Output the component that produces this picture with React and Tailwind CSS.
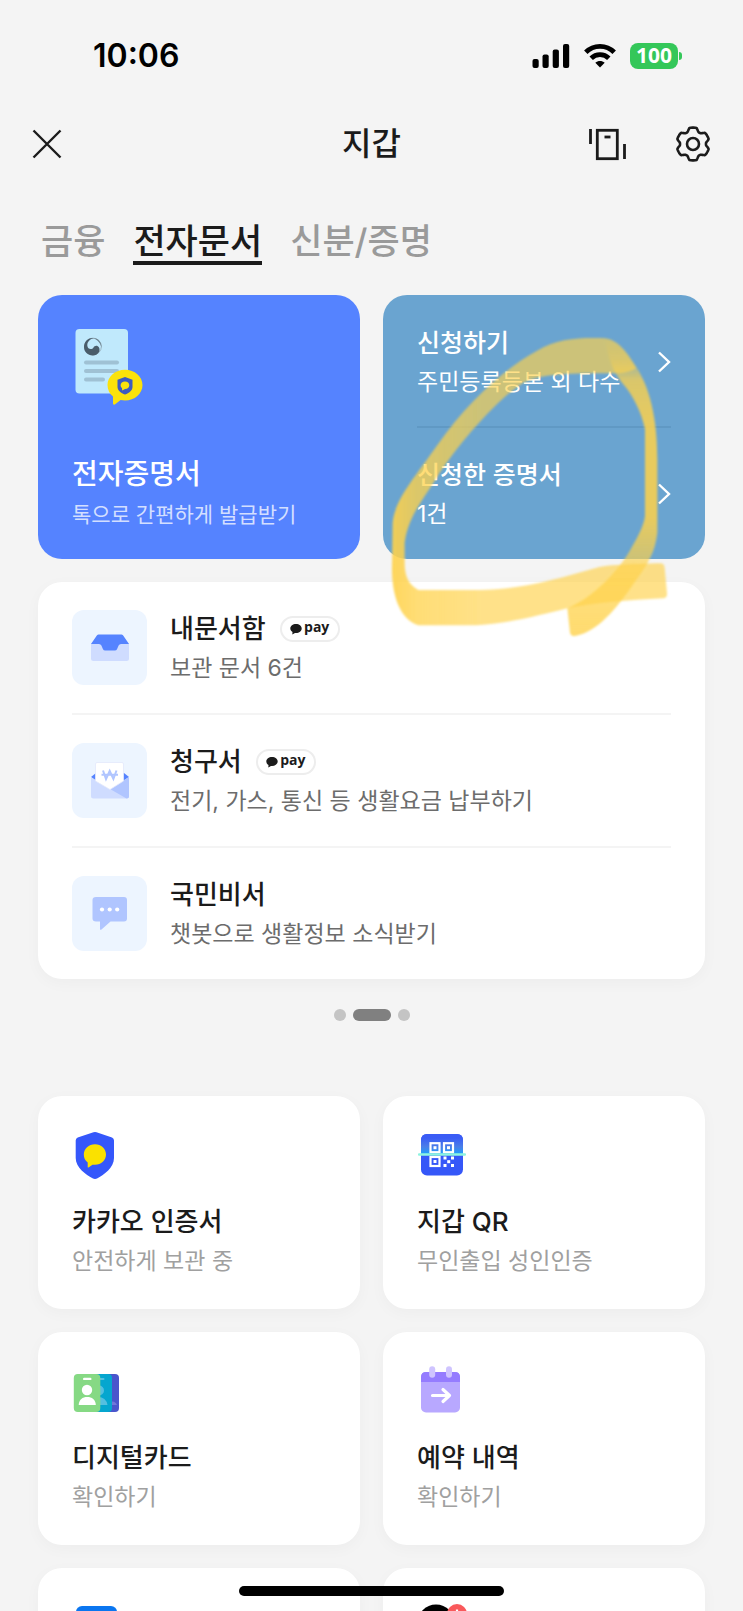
import clsx from 'clsx';

const tabs = ['금융', '전자문서', '신분/증명'];

// outline of the settings gear: six soft teeth around the centre
const gearPoints = Array.from({ length: 180 }, (_, i) => {
  const angle = (i / 180) * Math.PI * 2;
  const wave = Math.max(-1, Math.min(0.7, 0.35 - Math.cos(6 * angle) * 1.5));
  const r = 15 + wave * 2;
  return `${(18 + r * Math.cos(angle)).toFixed(2)},${(18 + r * Math.sin(angle)).toFixed(2)}`;
}).join(' ');

const CloseIcon = () => (
  <svg width="30" height="30" viewBox="0 0 30 30" fill="none" stroke="#1b1b1b" strokeWidth="2.4">
    <path d="M1.5 1.5L28.5 28.5M28.5 1.5L1.5 28.5" />
  </svg>
);

const CardsIcon = () => (
  <svg width="40" height="36" viewBox="0 0 40 36" fill="none" stroke="#1b1b1b" strokeWidth="2.8">
    <path d="M3.5 3V18M37.5 18V33" />
    <rect x="10.3" y="4.3" width="20" height="28.4" />
    <path d="M17.5 11H23.5" />
  </svg>
);

const GearIcon = () => (
  <svg width="36" height="36" viewBox="0 0 36 36" fill="none" stroke="#1b1b1b" strokeWidth="2.6" strokeLinejoin="round">
    <polygon points={gearPoints} />
    <circle cx="18" cy="18" r="6" />
  </svg>
);

const ChevronIcon = () => (
  <svg width="14" height="22" viewBox="0 0 14 22" fill="none" stroke="#ffffff" strokeWidth="2.4">
    <path d="M2 1.5L12 11L2 20.5" />
  </svg>
);

const CertificateIcon = () => (
  <svg width="72" height="82" viewBox="0 0 72 82">
    <rect x="3.5" y="2" width="52.5" height="64.5" rx="4" fill="#c0e9fc" />
    <circle cx="21" cy="19.5" r="8.4" fill="none" stroke="#9fb9c6" strokeWidth="1" />
    <path d="M22 11C15.500 10.200 12 15 12 20C12 25 16 28.700 21 28.500C26 28.300 28.800 24 27 20.500C25.500 17.800 22.500 18.500 21.500 20.500C20 23 15.500 22.500 15.300 18.500C15.200 14.500 18 12 22 11Z" fill="#4a5d6b" />
    <path d="M21 11C26 11 30 15 29.500 21C28.500 16 26 13 21 11Z" fill="#6b828f" />
    <g fill="#9fc1d4">
      <rect x="12" y="33.500" width="35" height="4" rx="2" />
      <rect x="12" y="42" width="35" height="4" rx="2" />
      <rect x="12" y="50.500" width="21" height="4" rx="2" />
    </g>
    <path d="M53 42.700C62.700 42.700 70.500 49.300 70.500 58C70.500 66.700 62.700 73.500 53 73.500C51.500 73.500 50 73.300 48.600 73L43.500 77C42 78.200 41 77.800 41 76V69.500C37.600 66.800 35.500 62.600 35.500 58C35.500 49.300 43.300 42.700 53 42.700Z" fill="#fbe20a" />
    <path d="M53 50L60.500 52.800V60C60.500 63.500 57 66 53 67.500C49 66 45.500 63.500 45.500 60V52.800Z" fill="#3d5bc0" />
    <path d="M53 54.500C55.500 54.500 57.300 56.200 57.300 58.200C57.300 60.300 55.500 62 53 62L50.200 63.500L50 61C49 60.300 48.600 59.400 48.600 58.200C48.600 56.200 50.500 54.500 53 54.500Z" fill="#fbe20a" />
  </svg>
);

const InboxIcon = () => (
  <svg width="75" height="75" viewBox="0 0 75 75">
    <path d="M19 33.500H57V48.500Q57 51 54.500 51H21.500Q19 51 19 48.500Z" fill="#cfdcff" />
    <path d="M26.500 24.500H49.500Q50.300 24.500 51 25.200L57 34H49Q47.300 34 46.600 35.600L45 39.200Q44.400 40.500 42.800 40.500H33.200Q31.600 40.500 31 39.200L29.400 35.600Q28.700 34 27 34H19L25 25.200Q25.700 24.500 26.500 24.500Z" fill="#5583ff" />
  </svg>
);

const BillIcon = () => (
  <svg width="75" height="75" viewBox="0 0 75 75">
    <path d="M19 34L24 30H52L57 34L52 38H24Z" fill="#5583ff" />
    <path d="M19 34L38 46L57 34V53Q57 55.500 54.500 55.500H21.500Q19 55.500 19 53Z" fill="#cfdcff" />
    <path d="M38 46L57 34V53Q57 55.500 54.500 55.500Z" fill="#b0c5ff" />
    <path d="M23.500 21Q23.500 19.500 25 19.500H50Q51.500 19.500 51.500 21V38L38 46.500L23.500 38Z" fill="#ffffff" stroke="#e3e9fb" strokeWidth="0.8" />
    <path d="M31 27.500L34 36L37.700 28L41.400 36L44.500 27.500M29.500 31.800H46" fill="none" stroke="#b0c5ff" strokeWidth="2" />
  </svg>
);

const ChatIcon = () => (
  <svg width="75" height="75" viewBox="0 0 75 75">
    <path d="M24 21H52Q55 21 55 24V42.500Q55 45.500 52 45.500H38.500L29.500 53.500Q28 54.600 28 52.800V45.500H24Q20.500 45.500 20.500 42.500V24Q20.500 21 24 21Z" fill="#b0c5ff" />
    <g fill="#ffffff">
      <circle cx="30" cy="33.500" r="2.100" />
      <circle cx="37.700" cy="33.500" r="2.100" />
      <circle cx="45.200" cy="33.500" r="2.100" />
    </g>
  </svg>
);

const ShieldIcon = () => (
  <svg className="overflow-visible" width="50" height="50" viewBox="0 0 50 50">
    <path d="M21.500 2.300Q23 1.700 24.500 2.300L40 7.500Q42 8.300 42 10.500V28C42 38 32 44.500 25.500 48.300Q23 49.500 20.500 48.300C14 44.500 3.700 38 3.700 28V10.500Q3.700 8.300 5.700 7.500Z" fill="#3557fb" />
    <path d="M23 14.300C29.300 14.300 34 18.800 34 24.500C34 30.300 29.300 34.800 23 34.800L20.500 34.700L16.500 37.500Q15.800 37.800 15.700 37V32.500C13 30.500 11.800 27.800 11.800 24.500C11.800 18.800 16.700 14.300 23 14.300Z" fill="#fae100" />
  </svg>
);

const QrIcon = () => (
  <svg className="overflow-visible" width="50" height="50" viewBox="0 0 50 50">
    <defs>
      <linearGradient id="qrScan" x1="0" y1="0" x2="0" y2="1">
        <stop offset="0.2" stopColor="#3a5cf5" />
        <stop offset="0.62" stopColor="#4a7ee8" />
        <stop offset="1" stopColor="#1aa0ff" />
      </linearGradient>
    </defs>
    <rect x="4" y="4" width="42" height="41.500" rx="6" fill="#3557f8" />
    <path d="M4 24.500V10Q4 4 10 4H40Q46 4 46 10V24.500Z" fill="url(#qrScan)" />
    <g fill="none" stroke="#ffffff" strokeWidth="2.200">
      <rect x="13.500" y="13.200" width="9" height="9" />
      <rect x="27" y="13.200" width="9" height="9" />
      <rect x="13.500" y="27" width="9" height="9" />
    </g>
    <g fill="#ffffff">
      <rect x="16.500" y="16.200" width="3" height="3" />
      <rect x="30" y="16.200" width="3" height="3" />
      <rect x="16.500" y="30" width="3" height="3" />
      <rect x="26.500" y="26.500" width="3" height="3" />
      <rect x="34" y="26.500" width="3" height="3" />
      <rect x="30.200" y="30.200" width="3" height="3" />
      <rect x="26.500" y="34" width="3" height="3" />
      <rect x="34" y="34" width="3" height="3" />
    </g>
    <rect x="1" y="23.300" width="48" height="2.400" rx="1" fill="#8df3e0" />
  </svg>
);

const IdCardIcon = () => (
  <svg className="overflow-visible" width="50" height="50" viewBox="0 0 50 50">
    <rect x="22" y="8" width="25" height="38" rx="4" fill="#4a55cc" />
    <path d="M38 36Q43 34 45 39H38Z" fill="#7078da" />
    <path d="M22 8H36Q40 8 40 12V42Q40 46 36 46H22Z" fill="#05a6cf" />
    <circle cx="27" cy="24.500" r="5" fill="#55bfe0" />
    <path d="M26 31Q34 31 35.500 39H26Z" fill="#55bfe0" />
    <path d="M28 12.900H31.500" stroke="#55bfe0" strokeWidth="2" strokeLinecap="round" />
    <rect x="1.800" y="8" width="26.500" height="38" rx="4" fill="#86d984" />
    <g fill="#ffffff">
      <rect x="11" y="11.700" width="8.500" height="2.400" rx="1.200" />
      <circle cx="15" cy="24" r="5.200" />
      <path d="M6.700 39C7 33.500 10.500 31 15.200 31C20 31 23.500 33.500 23.800 39Z" />
    </g>
  </svg>
);

const BookingIcon = () => (
  <svg className="overflow-visible" width="50" height="50" viewBox="0 0 50 50">
    <rect x="4" y="6" width="39" height="40.500" rx="5" fill="#b8a8ff" />
    <path d="M4 16V11Q4 6 9 6H38Q43 6 43 11V16Z" fill="#957cff" />
    <rect x="12.200" y="0.300" width="6" height="11.500" rx="3" fill="#cfc4ff" />
    <rect x="29" y="0.300" width="6" height="11.500" rx="3" fill="#cfc4ff" />
    <path d="M15.500 29.500H32.500M26 23.500L32.500 29.500L26 35.500" fill="none" stroke="#ffffff" strokeWidth="3.200" strokeLinecap="round" strokeLinejoin="round" />
  </svg>
);

const BlueCardIcon = () => (
  <svg className="overflow-visible" width="50" height="50" viewBox="0 0 50 50">
    <rect x="4" y="4" width="41" height="42" rx="6" fill="#0a76f0" />
  </svg>
);

const NoticeIcon = () => (
  <svg className="overflow-visible" width="50" height="50" viewBox="0 0 50 50">
    <ellipse cx="19" cy="22" rx="19" ry="19.500" fill="#000000" />
    <circle cx="40" cy="12" r="10" fill="#f9595b" />
    <path d="M40 7.500V13M40 15.500V17.500" stroke="#ffffff" strokeWidth="2.200" />
  </svg>
);

const PayBadge = () => (
  <span className="flex h-[26px] w-[60px] items-center justify-center gap-0.5 rounded-full border-2 border-[#ededed] bg-white">
    <svg width="12" height="12" viewBox="0 0 12 12" fill="#1b1b1b">
      <path d="M6 1C9.200 1 11.700 2.900 11.700 5.500C11.700 8 9.200 10 6 10L5 9.900L2.300 11.500L2.500 9C1.200 8.200 0.300 7 0.300 5.500C0.300 2.900 2.800 1 6 1Z" />
    </svg>
    <span className="pb-1 font-['Open_Sans',sans-serif] text-sm font-bold">pay</span>
  </span>
);

const documents = [
  { title: '내문서함', desc: '보관 문서 6건', icon: InboxIcon, pay: true },
  { title: '청구서', desc: '전기, 가스, 통신 등 생활요금 납부하기', icon: BillIcon, pay: true },
  { title: '국민비서', desc: '챗봇으로 생활정보 소식받기', icon: ChatIcon, pay: false },
];

const requests = [
  { title: '신청하기', desc: '주민등록등본 외 다수' },
  { title: '신청한 증명서', desc: '1건' },
];

const services = [
  { id: 'cert', title: '카카오 인증서', desc: '안전하게 보관 중', icon: ShieldIcon },
  { id: 'qr', title: '지갑 QR', desc: '무인출입 성인인증', icon: QrIcon },
  { id: 'card', title: '디지털카드', desc: '확인하기', icon: IdCardIcon },
  { id: 'booking', title: '예약 내역', desc: '확인하기', icon: BookingIcon },
  { id: 'blue', icon: BlueCardIcon },
  { id: 'notice', icon: NoticeIcon },
];

const StatusBar = () => (
  <div className="flex h-28 shrink-0 items-center justify-between pr-[61px] pl-[93px]">
    <span className="text-[32px] font-semibold text-black">10:06</span>
    <div className="flex items-center gap-3.5">
      <svg width="38" height="26" viewBox="0 0 38 26">
        <rect x="0.5" y="16" width="6.200" height="9" rx="2" />
        <rect x="10.500" y="11.500" width="6.200" height="13.500" rx="2" />
        <rect x="20.700" y="6.500" width="6.200" height="18.500" rx="2" />
        <rect x="31" y="1" width="6.200" height="24" rx="2" />
      </svg>
      <svg width="32" height="26" viewBox="0 0 32 26" fill="none" stroke="#000000" strokeWidth="4.800">
        <path d="M1.800 9.300C9.500 1.400 22.500 1.400 30.200 9.300" />
        <path d="M7.200 15.200C12 10.400 20 10.400 24.800 15.200" />
        <path d="M16 24.500L11.300 19.800C14 17.300 18 17.300 20.700 19.800Z" fill="#000000" stroke="none" />
      </svg>
      <div className="flex items-center gap-px">
        <span className="flex h-[26px] w-12 items-center justify-center rounded-lg bg-[#34c759] font-['Noto_Sans',sans-serif] text-[21px] font-bold text-white">100</span>
        <span className="h-2 w-[3px] rounded-r-full bg-[#34c759]" />
      </div>
    </div>
  </div>
);

// highlighter stroke drawn over the cards
const Highlighter = () => (
  <svg className="pointer-events-none absolute -top-[9px] right-0" width="373" height="360" viewBox="0 0 1119 1080">
    <defs>
      <linearGradient id="inkLeft" gradientUnits="userSpaceOnUse" x1="66" y1="0" x2="330" y2="0">
        <stop offset="0" stopColor="#ffd24a" stopOpacity="0.9" />
        <stop offset="0.28" stopColor="#ffd24a" stopOpacity="0.76" />
        <stop offset="1" stopColor="#ffd24a" stopOpacity="0.66" />
      </linearGradient>
      <linearGradient id="inkRight" gradientUnits="userSpaceOnUse" x1="0" y1="157" x2="0" y2="1050">
        <stop offset="0" stopColor="#ffd24a" stopOpacity="0" />
        <stop offset="0.07" stopColor="#ffd24a" stopOpacity="0.25" />
        <stop offset="0.14" stopColor="#ffd24a" stopOpacity="0.75" />
        <stop offset="0.3" stopColor="#ffd24a" stopOpacity="0.85" />
        <stop offset="0.6" stopColor="#ffd24a" stopOpacity="0.85" />
        <stop offset="0.74" stopColor="#ffd24a" stopOpacity="0.66" />
        <stop offset="1" stopColor="#ffd24a" stopOpacity="0.8" />
      </linearGradient>
      <filter id="inkEdge">
        <feGaussianBlur stdDeviation="3" />
      </filter>
    </defs>
    <g filter="url(#inkEdge)">
      <path
        fill="url(#inkLeft)"
        d="M705 157C640 155 565 155 500 195C400 250 290 350 200 480C130 580 75 640 68 710L66 850C66 930 90 1000 145 1018L320 1018C420 1012 520 985 592 967C680 950 770 942 880 937Q892 936 891 922L884 845Q883 832 870 832C800 834 720 835 680 845C560 880 440 912 330 912L145 912C115 895 104 870 104 830L104 770C115 690 160 640 200 575C260 480 380 340 460 290C520 262 600 262 736 262C760 262 790 255 799 246C772 200 745 162 705 157Z"
      />
      <path
        fill="url(#inkRight)"
        d="M705 157C745 162 772 200 797 240C850 320 862 430 862 520L862 740C855 800 835 830 800 880C740 970 680 1040 615 1050Q603 1051 600 1040L592 967C660 940 730 870 770 810C800 760 822 720 825 690L825 430C815 380 790 330 760 295C735 262 720 240 705 157Z"
      />
    </g>
  </svg>
);

const ServiceCard = ({ title, desc, icon: Icon }) => (
  <button className="flex min-h-[213px] flex-col items-start rounded-3xl bg-white px-[34px] pt-[34px] pb-7 text-left shadow-[0_4px_16px_rgba(0,0,0,0.03)]">
    <Icon />
    {title && <span className="mt-[22px] text-[26px] leading-10 font-medium">{title}</span>}
    {desc && <span className="text-[23px] leading-[38px] text-[#a0a0a0]">{desc}</span>}
  </button>
);

const App = () => {
  return (
    <div className="relative flex h-screen flex-col overflow-hidden bg-[#f4f4f4] font-['Inter','Noto_Sans_CJK_KR',sans-serif] text-[#1b1b1b]">
      <StatusBar />

      <header className="grid h-16 shrink-0 grid-cols-3 items-center px-8">
        <button aria-label="닫기" className="justify-self-start">
          <CloseIcon />
        </button>
        <h1 className="text-center text-[32px] leading-10 font-medium">지갑</h1>
        <div className="flex items-center gap-12 justify-self-end">
          <button aria-label="카드"><CardsIcon /></button>
          <button aria-label="설정"><GearIcon /></button>
        </div>
      </header>

      <main className="min-h-0 flex-1 overflow-y-auto [scrollbar-width:none]">
        <nav className="flex gap-7 px-[41px] pt-[45px] pb-[30px]">
          {tabs.map((tab) => (
            <button
              key={tab}
              className={clsx(
                'border-b-4 text-[35px] leading-10 font-medium',
                tab === '전자문서' ? 'border-[#1b1b1b]' : 'border-transparent text-[#9a9a9a]'
              )}
            >
              {tab}
            </button>
          ))}
        </nav>

        <section className="relative flex flex-col gap-[23px] px-[38px]">
          <div className="grid grid-cols-2 gap-[23px]">
            <button className="flex flex-col items-start rounded-3xl bg-[#5583ff] px-[34px] pt-8 pb-6 text-left text-white">
              <CertificateIcon />
              <span className="mt-[45px] text-[28px] leading-10 font-medium">전자증명서</span>
              <span className="mt-0.5 text-[21px] leading-[38px] text-[#d3dfff]">톡으로 간편하게 발급받기</span>
            </button>

            <div className="divide-y-2 divide-[#6099c4] rounded-3xl bg-[#6aa4d0] px-[34px] pt-0.5 text-white">
              {requests.map((item) => (
                <button key={item.title} className="flex h-[131px] w-full items-center justify-between text-left">
                  <span className="flex flex-col">
                    <span className="text-[25px] leading-10 font-medium">{item.title}</span>
                    <span className="text-[23px] leading-[38px]">{item.desc}</span>
                  </span>
                  <ChevronIcon />
                </button>
              ))}
            </div>
          </div>

          <ul className="divide-y-2 divide-[#f4f4f4] rounded-3xl bg-white px-[34px] shadow-[0_4px_16px_rgba(0,0,0,0.03)]">
            {documents.map(({ title, desc, icon: Icon, pay }) => (
              <li key={title}>
                <button className="flex h-[131px] w-full items-center gap-[23px] text-left">
                  <span className="rounded-xl bg-[#edf5ff]">
                    <Icon />
                  </span>
                  <span className="flex flex-col">
                    <span className="flex items-center gap-3.5">
                      <span className="text-[26px] leading-10 font-medium">{title}</span>
                      {pay && <PayBadge />}
                    </span>
                    <span className="text-[23px] leading-[38px] text-[#6c6c6c]">{desc}</span>
                  </span>
                </button>
              </li>
            ))}
          </ul>
          <Highlighter />
        </section>

        <div className="mt-[30px] mb-[75px] flex justify-center gap-[7px]">
          <span className="size-3 rounded-full bg-[#c4c4c4]" />
          <span className="h-3 w-[38px] rounded-full bg-[#808080]" />
          <span className="size-3 rounded-full bg-[#c4c4c4]" />
        </div>

        <section className="grid grid-cols-2 gap-[23px] px-[38px] pb-16">
          {services.map(({ id, ...service }) => (
            <ServiceCard key={id} {...service} />
          ))}
        </section>
      </main>

      <div className="absolute inset-x-0 bottom-[15px] flex justify-center">
        <span className="h-2.5 w-[265px] rounded-full bg-black" />
      </div>
    </div>
  );
};

export default App;
